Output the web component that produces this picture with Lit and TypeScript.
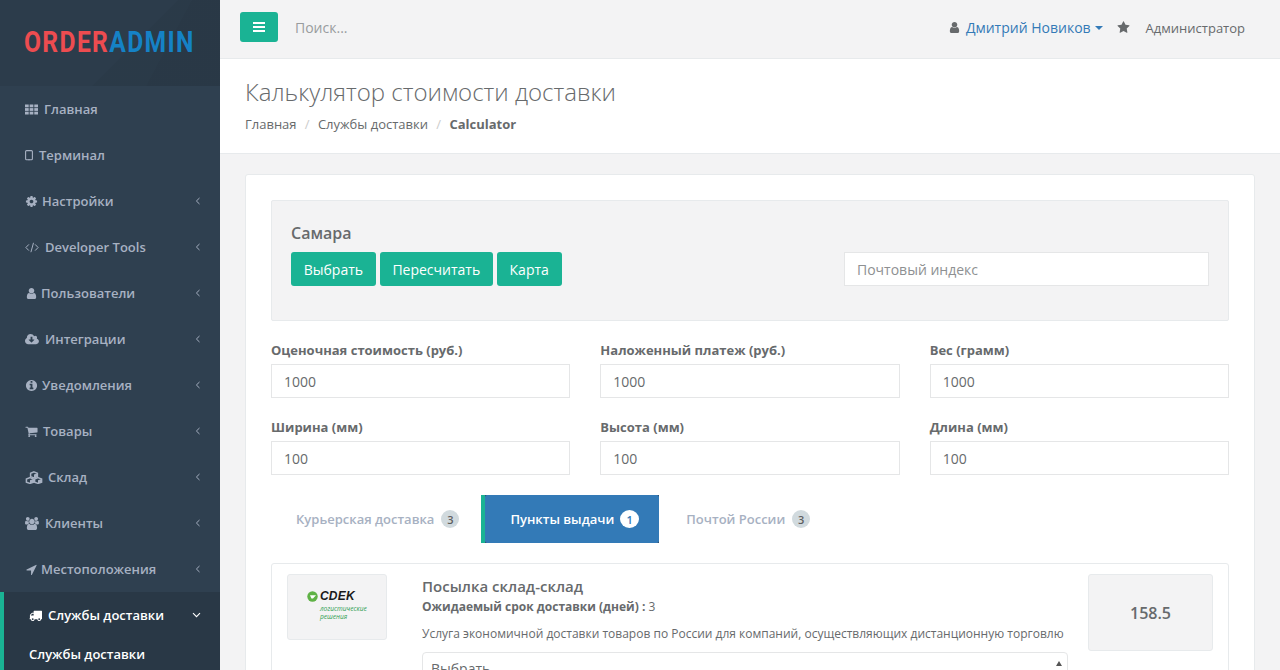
import { LitElement, html, css, svg } from "lit";
import { customElement } from "lit/decorators.js";

const fa = (d: string, w = 1792) =>
  html`<svg class="fa" viewBox="0 0 ${w} 1792" style="width:${(w / 1792) * 13}px"><path fill="currentColor" d=${d}></path></svg>`;

const P = {
  cog: "M1152 896q0-106-75-181t-181-75-181 75-75 181 75 181 181 75 181-75 75-181zm512-109v222q0 12-8 23t-20 13l-185 28q-19 54-39 91 35 50 107 138 10 12 10 25t-9 23q-27 37-99 108t-94 71q-12 0-26-9l-138-108q-44 23-91 38-16 136-29 186-7 28-36 28h-222q-14 0-24.5-8.5t-11.5-21.5l-28-184q-49-16-90-37l-141 107q-10 9-25 9-14 0-25-11-126-114-165-168-7-10-7-23 0-12 8-23 15-21 51-66.5t54-70.5q-27-50-41-99l-183-27q-13-2-21-12.5t-8-23.5v-222q0-12 8-23t19-13l186-28q14-46 39-92-40-57-107-138-10-12-10-24 0-10 9-23 26-36 98.5-107.5t94.5-71.5q13 0 26 10l138 107q44-23 91-38 16-136 29-186 7-28 36-28h222q14 0 24.5 8.5t11.5 21.5l28 184q49 16 90 37l142-107q9-9 24-9 13 0 25 10 129 119 165 170 7 8 7 22 0 12-8 23-15 21-51 66.5t-54 70.5q26 50 41 98l183 28q13 2 21 12.5t8 23.5z",
  user: "M1536 1399q0 109-62.5 187t-150.5 78h-854q-88 0-150.5-78t-62.5-187q0-85 8.5-160.5t31.5-152 58.5-131 94-89 134.5-34.5q131 128 313 128t313-128q76 0 134.5 34.5t94 89 58.5 131 31.5 152 8.5 160.5zm-256-887q0 159-112.5 271.5t-271.5 112.5-271.5-112.5-112.5-271.5 112.5-271.5 271.5-112.5 271.5 112.5 112.5 271.5z",
  star: "M1728 647q0 22-26 48l-363 354 86 500q1 7 1 20 0 21-10.5 35.5t-30.5 14.5q-19 0-40-12l-449-236-449 236q-22 12-40 12-21 0-31.5-14.5t-10.5-35.5q0-6 2-20l86-500-364-354q-25-27-25-48 0-37 56-46l502-73 225-455q19-41 49-41t49 41l225 455 502 73q56 9 56 46z",
  info: "M1152 1376v-160q0-14-9-23t-23-9h-96v-512q0-14-9-23t-23-9h-320q-14 0-23 9t-9 23v160q0 14 9 23t23 9h96v320h-96q-14 0-23 9t-9 23v160q0 14 9 23t23 9h448q14 0 23-9t9-23zm-128-896v-160q0-14-9-23t-23-9h-192q-14 0-23 9t-9 23v160q0 14 9 23t23 9h192q14 0 23-9t9-23zm640 416q0 209-103 385.5t-279.5 279.5-385.5 103-385.5-103-279.5-279.5-103-385.5 103-385.5 279.5-279.5 385.5-103 385.5 103 279.5 279.5 103 385.5z",
  cart: "M704 1536q0 52-38 90t-90 38-90-38-38-90 38-90 90-38 90 38 38 90zm896 0q0 52-38 90t-90 38-90-38-38-90 38-90 90-38 90 38 38 90zm128-1088v512q0 24-16.5 42.5t-40.5 21.5l-1044 122q13 60 13 70 0 16-24 64h920q26 0 45 19t19 45-19 45-45 19h-1024q-26 0-45-19t-19-45q0-11 8-31.5t16-36 21.5-40 15.5-29.5l-177-823h-204q-26 0-45-19t-19-45 19-45 45-19h256q16 0 28.5 6.5t19.5 15.5 13 24.5 8 26 5.5 29.5 4.5 26h1201q26 0 45 19t19 45z",
  arrow: "M1593 349l-640 1280q-17 35-57 35-5 0-15-2-22-5-35.5-22.5t-13.5-39.5v-576h-576q-22 0-39.5-13.5t-22.5-35.5 4-42 29-30l1280-640q13-7 29-7 27 0 45 19 15 14 18.5 34.5t-6.5 39.5z",
  truck: "M640 1408q0-52-38-90t-90-38-90 38-38 90 38 90 90 38 90-38 38-90zm-384-512h384v-256h-158q-13 0-22 9l-195 195q-9 9-9 22v30zm1280 512q0-52-38-90t-90-38-90 38-38 90 38 90 90 38 90-38 38-90zm256-1088v1024q0 15-4 26.5t-13.5 18.5-16.5 11.5-23.5 6-22.5 2-25.5 0-22.5-.5q0 106-75 181t-181 75-181-75-75-181h-384q0 106-75 181t-181 75-181-75-75-181h-64q-3 0-22.5.5t-25.5 0-22.5-2-23.5-6-16.5-11.5-13.5-18.5-4-26.5q0-26 19-45t45-19v-320q0-8-.5-35t0-38 2.5-34.5 6.5-37 14-30.5 22.5-30l198-198q19-19 50.5-32t58.5-13h160v-192q0-26 19-45t45-19h1024q26 0 45 19t19 45z",
  users: "M593 896q-162 5-265 128h-134q-82 0-138-40.5t-56-118.5q0-353 124-353 6 0 43.5 21t97.5 42.5 119 21.5q67 0 133-23-5 37-5 66 0 139 81 256zm1071 637q0 120-73 189.5t-194 69.5h-874q-121 0-194-69.5t-73-189.5q0-53 3.5-103.5t14-109 26.5-108.5 43-97.5 62-81 85.5-53.5 111.5-20q10 0 43 21.5t73 48 107 48 135 21.5 135-21.5 107-48 73-48 43-21.5q61 0 111.5 20t85.5 53.5 62 81 43 97.5 26.5 108.5 14 109 3.5 103.5zm-1024-1277q0 106-75 181t-181 75-181-75-75-181 75-181 181-75 181 75 75 181zm704 384q0 159-112.5 271.5t-271.5 112.5-271.5-112.5-112.5-271.5 112.5-271.5 271.5-112.5 271.5 112.5 112.5 271.5zm576 225q0 78-56 118.5t-138 40.5h-134q-103-123-265-128 81-117 81-256 0-29-5-66 66 23 133 23 59 0 119-21.5t97.5-42.5 43.5-21q124 0 124 353zm-128-609q0 106-75 181t-181 75-181-75-75-181 75-181 181-75 181 75 75 181z",
  cloud: "M1280 928q0-14-9-23t-23-9h-224v-352q0-13-9.5-22.5t-22.5-9.5h-192q-13 0-22.5 9.5t-9.5 22.5v352h-224q-13 0-22.5 9.5t-9.5 22.5q0 14 9 23l352 352q9 9 23 9t23-9l351-351q10-12 10-24zm640 224q0 159-112.5 271.5t-271.5 112.5h-1088q-185 0-316.5-131.5t-131.5-316.5q0-130 70-240t188-165q-2-30-2-43 0-212 150-362t362-150q156 0 285.5 87t188.5 231q71-62 166-62 106 0 181 75t75 181q0 76-41 138 130 31 213.5 135.5t83.5 238.5z",
};

const box = (w: number, inner: unknown) =>
  html`<svg class="fa" viewBox="0 0 ${w} 13" style="width:${w}px">${inner}</svg>`;

const thIcon = box(13, svg`<g fill="currentColor">
  <rect x="0" y="1.5" width="3.7" height="2.8"/><rect x="4.65" y="1.5" width="3.7" height="2.8"/><rect x="9.3" y="1.5" width="3.7" height="2.8"/>
  <rect x="0" y="5.1" width="3.7" height="2.8"/><rect x="4.65" y="5.1" width="3.7" height="2.8"/><rect x="9.3" y="5.1" width="3.7" height="2.8"/>
  <rect x="0" y="8.7" width="3.7" height="2.8"/><rect x="4.65" y="8.7" width="3.7" height="2.8"/><rect x="9.3" y="8.7" width="3.7" height="2.8"/></g>`);
const tabletIcon = box(8, svg`<rect x=".6" y="1.6" width="6.8" height="9.2" rx="1" fill="none" stroke="currentColor" stroke-width="1.1"/><rect x="3.3" y="10.2" width="1.4" height="1" fill="currentColor"/>`);
const codeIcon = box(14, svg`<path d="M3.9 3.4.9 6.5l3 3.1M10.1 3.4l3 3.1-3 3.1M8.5 1.8 5.9 11.2" fill="none" stroke="currentColor" stroke-width="1"/>`);
const cubesIcon = box(18, svg`<g fill="none" stroke="currentColor" stroke-width="1.5">
  <path d="M9 .9 12.4 2.2V5.6L9 7 5.6 5.6V2.2z"/><path d="M5 6.6 8.4 8V11.2L5 12.4 1.4 11.2V8z"/><path d="M13 6.6 16.6 8V11.2L13 12.4 9.6 11.2V8z"/></g>
  <path d="M9 3.6 12.4 2.2V5.6L9 7zM5 9.2 8.4 8V11.2L5 12.4zM13 9.2 16.6 8V11.2L13 12.4z" fill="currentColor"/>`);

const MENU: { icon: unknown; label: string; gap: number; arrow?: boolean }[] = [
  { icon: thIcon, label: "Главная", gap: 6 },
  { icon: tabletIcon, label: "Терминал", gap: 6 },
  { icon: fa(P.cog), label: "Настройки", gap: 4 },
  { icon: codeIcon, label: "Developer Tools", gap: 6 },
  { icon: fa(P.user), label: "Пользователи", gap: 3 },
  { icon: fa(P.cloud, 1920), label: "Интеграции", gap: 6 },
  { icon: fa(P.info), label: "Уведомления", gap: 4 },
  { icon: fa(P.cart), label: "Товары", gap: 5 },
  { icon: cubesIcon, label: "Склад", gap: 5 },
  { icon: fa(P.users, 1920), label: "Клиенты", gap: 6 },
  { icon: fa(P.arrow), label: "Местоположения", gap: 3 },
].map((m, i) => ({ ...m, arrow: i > 1 }));

const FIELDS = [
  ["Оценочная стоимость (руб.)", "1000"],
  ["Наложенный платеж (руб.)", "1000"],
  ["Вес (грамм)", "1000"],
  ["Ширина (мм)", "100"],
  ["Высота (мм)", "100"],
  ["Длина (мм)", "100"],
];

const TABS = [
  { label: "Курьерская доставка", count: 3, active: false },
  { label: "Пункты выдачи", count: 1, active: true },
  { label: "Почтой России", count: 3, active: false },
];

@customElement("app-root")
export class AppRoot extends LitElement {
  static styles = css`
    :host {
      display: flex;
      height: 100vh;
      overflow: hidden;
      font-family: "Open Sans", sans-serif;
      font-size: 13px;
      color: #676a6c;
      background: #f3f3f4;
    }
    * { box-sizing: border-box; }
    .fa { height: 13px; flex: none; display: block; }

    .sidebar { width: 220px; flex: none; background: #2f4050; display: flex; flex-direction: column; }
    .logo {
      height: 86px;
      flex: none;
      display: flex;
      align-items: center;
      padding: 0 0 2px 24px;
      background:
        linear-gradient(118deg, rgba(0,0,0,0) 72%, rgba(0,0,0,.03) 72.4%),
        linear-gradient(135deg, rgba(0,0,0,0) 58%, rgba(0,0,0,.04) 58.4%),
        #2c3c4b;
    }
    .wordmark {
      font-family: Roboto, "Liberation Sans", sans-serif;
      font-size: 29px;
      font-weight: 700;
      letter-spacing: 1.6px;
      line-height: 1;
      white-space: nowrap;
      transform: scaleX(0.85);
      transform-origin: left center;
    }
    .wordmark .a { color: #ed4c50; }
    .wordmark .b { color: #1582c6; }
    .item {
      height: 46px;
      flex: none;
      display: flex;
      align-items: center;
      padding: 0 19px 0 25px;
      color: #a7b1c2;
      font-weight: 600;
    }
    .item .label { flex: 1; }
    .chev { width: 6px; height: 10px; flex: none; }
    .active-group {
      flex: 1;
      background: #293846;
      border-left: 4px solid #1ab394;
    }
    .active-group .item { color: #fff; }
    .sub { color: #fff; font-weight: 600; padding: 7px 0 0 25px; }

    .main { flex: 1; min-width: 0; display: flex; flex-direction: column; }
    .topbar {
      height: 59px;
      flex: none;
      display: flex;
      align-items: center;
      padding: 0 35px 3px 20px;
      border-bottom: 1px solid #e7eaec;
    }
    .burger {
      width: 38px;
      height: 30px;
      margin-bottom: 2px;
      background: #1ab394;
      border-radius: 3px;
      display: flex;
      flex-direction: column;
      align-items: center;
      justify-content: center;
      gap: 2px;
    }
    .burger i { display: block; width: 12px; height: 2px; background: #fff; }
    .search { margin-left: 17px; font-size: 14px; color: #999c9e; flex: 1; }
    .who { display: flex; align-items: center; color: #676a6c; }
    .who .name { color: #337ab7; font-size: 14px; margin-left: 5px; }
    .caret {
      width: 0;
      height: 0;
      margin: 0 0 0 4px;
      border: 4px solid transparent;
      border-top-color: #337ab7;
      border-bottom-width: 0;
    }
    .who .star { margin-left: 14px; }
    .who .role { margin-left: 16px; }

    .heading {
      height: 95px;
      flex: none;
      background: #fff;
      border-bottom: 1px solid #e7eaec;
      padding: 16px 25px 0;
    }
    .heading h2 { margin: 0; font-size: 24px; font-weight: 300; line-height: 33px; color: #676a6c; }
    .crumbs { display: flex; margin-top: 7px; line-height: 18px; }
    .crumbs .sep { color: #ccc; padding: 0 8.3px; }
    .crumbs b { font-weight: 700; }

    .content { padding: 20px 25px 0; flex: 1; min-height: 0; }
    .card {
      background: #fff;
      border: 1px solid #e7eaec;
      border-radius: 3px;
      padding: 25px;
      height: 700px;
    }
    .city {
      height: 121px;
      background: #f3f3f4;
      border: 1px solid #e7eaec;
      border-radius: 2px;
      padding: 20px 19px;
      display: flex;
      justify-content: space-between;
    }
    .city h3 { margin: 0; font-size: 16px; font-weight: 600; line-height: 24px; height: 31px; }
    .btns { display: flex; gap: 4px; }
    .btn {
      height: 34px;
      padding: 0 12.7px;
      background: #1ab394;
      color: #fff;
      border-radius: 3px;
      font-size: 14px;
      display: flex;
      align-items: center;
    }
    .input {
      height: 34px;
      border: 1px solid #e5e6e7;
      background: #fff;
      display: flex;
      align-items: center;
      padding: 0 12px;
      font-size: 14px;
      color: #676a6c;
    }
    .postcode { width: 365px; margin-top: 31px; color: #8e9092; }
    .fields {
      display: grid;
      grid-template-columns: 1fr 1fr 1fr;
      column-gap: 30px;
      row-gap: 20px;
      margin-top: 20px;
    }
    .fields label { display: block; font-weight: 700; line-height: 18px; margin-bottom: 5px; }
    .tabs { display: flex; gap: 2px; margin-top: 20px; height: 48px; }
    .tab { display: flex; }
    .tab-in {
      display: flex;
      align-items: center;
      padding: 0 20px 0 25px;
      color: #a7b1c2;
      font-weight: 600;
    }
    .tab.active { background: #2f4050; }
    .tab.active::before { content: ""; width: 4px; background: #1ab394; }
    .tab.active .tab-in { color: #fff; background: #337ab7; border-radius: 2px; }
    .badge {
      margin-left: 7px;
      width: 18px;
      height: 18px;
      border-radius: 50%;
      background: #d1dade;
      color: #5e5e5e;
      font-size: 11px;
      font-weight: 600;
      display: flex;
      align-items: center;
      justify-content: center;
    }
    .tab.active .badge { background: #fff; color: #337ab7; margin-left: 6px; width: 19px; }
    .result {
      margin-top: 20px;
      border: 1px solid #e7eaec;
      border-radius: 3px;
      padding: 10px 15px;
      display: flex;
      height: 200px;
    }
    .carrier {
      width: 100px;
      height: 66px;
      flex: none;
      background: #f3f3f4;
      border: 1px solid #e7eaec;
      border-radius: 3px;
      display: flex;
      flex-direction: column;
      padding: 15px 0 0 19px;
    }
    .cdek {
      display: flex;
      align-items: center;
      gap: 2px;
      font-family: "Liberation Sans", sans-serif;
      font-size: 12px;
      line-height: 12px;
      font-weight: 700;
      font-style: italic;
      letter-spacing: .2px;
      color: #1a1a1a;
    }
    .tagline { margin: 3px 0 0 13px; font-size: 6.6px; line-height: 7.5px; font-style: italic; color: #2f9e53; }
    .info { margin-left: 35px; width: 646px; flex: none; }
    .info h4 { margin: 1px 0 0; font-size: 15px; font-weight: 600; line-height: 22px; }
    .eta { font-size: 12px; line-height: 18px; margin-top: 1px; }
    .eta b { font-weight: 700; }
    .desc { font-size: 12px; line-height: 18px; margin-top: 9px; }
    .select {
      position: relative;
      height: 34px;
      margin-top: 9px;
      border: 1px solid #e5e6e7;
      border-radius: 4px;
      padding: 6px 8px;
      font-size: 14px;
      line-height: 20px;
    }
    .select::after {
      content: "";
      position: absolute;
      right: 5px;
      top: 8px;
      border: 3px solid transparent;
      border-top-width: 0;
      border-bottom: 5px solid #555;
    }
    .price {
      margin-left: 20px;
      width: 125px;
      height: 77px;
      flex: none;
      background: #f3f3f4;
      border: 1px solid #e7eaec;
      border-radius: 3px;
      display: flex;
      align-items: center;
      justify-content: center;
      font-size: 16px;
      font-weight: 600;
    }
  `;

  private chevron(down = false) {
    return down
      ? html`<svg class="chev" style="width:9px" viewBox="0 0 9 10"><path d="M1 3.2 4.5 6.7 8 3.2" fill="none" stroke="currentColor" stroke-width="1.1"></path></svg>`
      : html`<svg class="chev" viewBox="0 0 6 10"><path d="M4.5 2 1.4 5l3.1 3" fill="none" stroke="currentColor" stroke-width="1"></path></svg>`;
  }

  render() {
    return html`
      <aside class="sidebar">
        <div class="logo"><div class="wordmark"><span class="a">ORDER</span><span class="b">ADMIN</span></div></div>
        ${MENU.map(
          (m) => html`<div class="item">
            ${m.icon}<span class="label" style="margin-left:${m.gap}px">${m.label}</span>
            ${m.arrow ? this.chevron() : ""}
          </div>`
        )}
        <div class="active-group">
          <div class="item">
            ${fa(P.truck)}<span class="label" style="margin-left:6px">Службы доставки</span>${this.chevron(true)}
          </div>
          <div class="sub">Службы доставки</div>
        </div>
      </aside>
      <div class="main">
        <header class="topbar">
          <div class="burger"><i></i><i></i><i></i></div>
          <div class="search">Поиск...</div>
          <div class="who">
            ${fa(P.user)}<span class="name">Дмитрий Новиков</span><span class="caret"></span>
            <span class="star">${fa(P.star)}</span><span class="role">Администратор</span>
          </div>
        </header>
        <section class="heading">
          <h2>Калькулятор стоимости доставки</h2>
          <div class="crumbs">
            <span>Главная</span><span class="sep">/</span><span>Службы доставки</span><span class="sep">/</span><b>Calculator</b>
          </div>
        </section>
        <div class="content">
          <div class="card">
            <div class="city">
              <div>
                <h3>Самара</h3>
                <div class="btns">
                  <div class="btn">Выбрать</div>
                  <div class="btn">Пересчитать</div>
                  <div class="btn">Карта</div>
                </div>
              </div>
              <div class="input postcode">Почтовый индекс</div>
            </div>
            <div class="fields">
              ${FIELDS.map(
                ([label, value]) => html`<div><label>${label}</label><div class="input">${value}</div></div>`
              )}
            </div>
            <div class="tabs">
              ${TABS.map(
                (t) => html`<div class="tab ${t.active ? "active" : ""}"><div class="tab-in">${t.label}<span class="badge">${t.count}</span></div></div>`
              )}
            </div>
            <div class="result">
              <div class="carrier">
                <div class="cdek">
                  <svg width="11" height="11" viewBox="0 0 11 11"><circle cx="5.5" cy="5.5" r="5.2" fill="#5fb246"></circle><path d="M3 4.2h6L6 7.6H4.4z" fill="#fff"></path></svg>
                  <span>СDEK</span>
                </div>
                <div class="tagline">логистические<br />решения</div>
              </div>
              <div class="info">
                <h4>Посылка склад-склад</h4>
                <div class="eta"><b>Ожидаемый срок доставки (дней) :</b> 3</div>
                <div class="desc">Услуга экономичной доставки товаров по России для компаний, осуществляющих дистанционную торговлю</div>
                <div class="select">Выбрать</div>
              </div>
              <div class="price">158.5</div>
            </div>
          </div>
        </div>
      </div>
    `;
  }
}
